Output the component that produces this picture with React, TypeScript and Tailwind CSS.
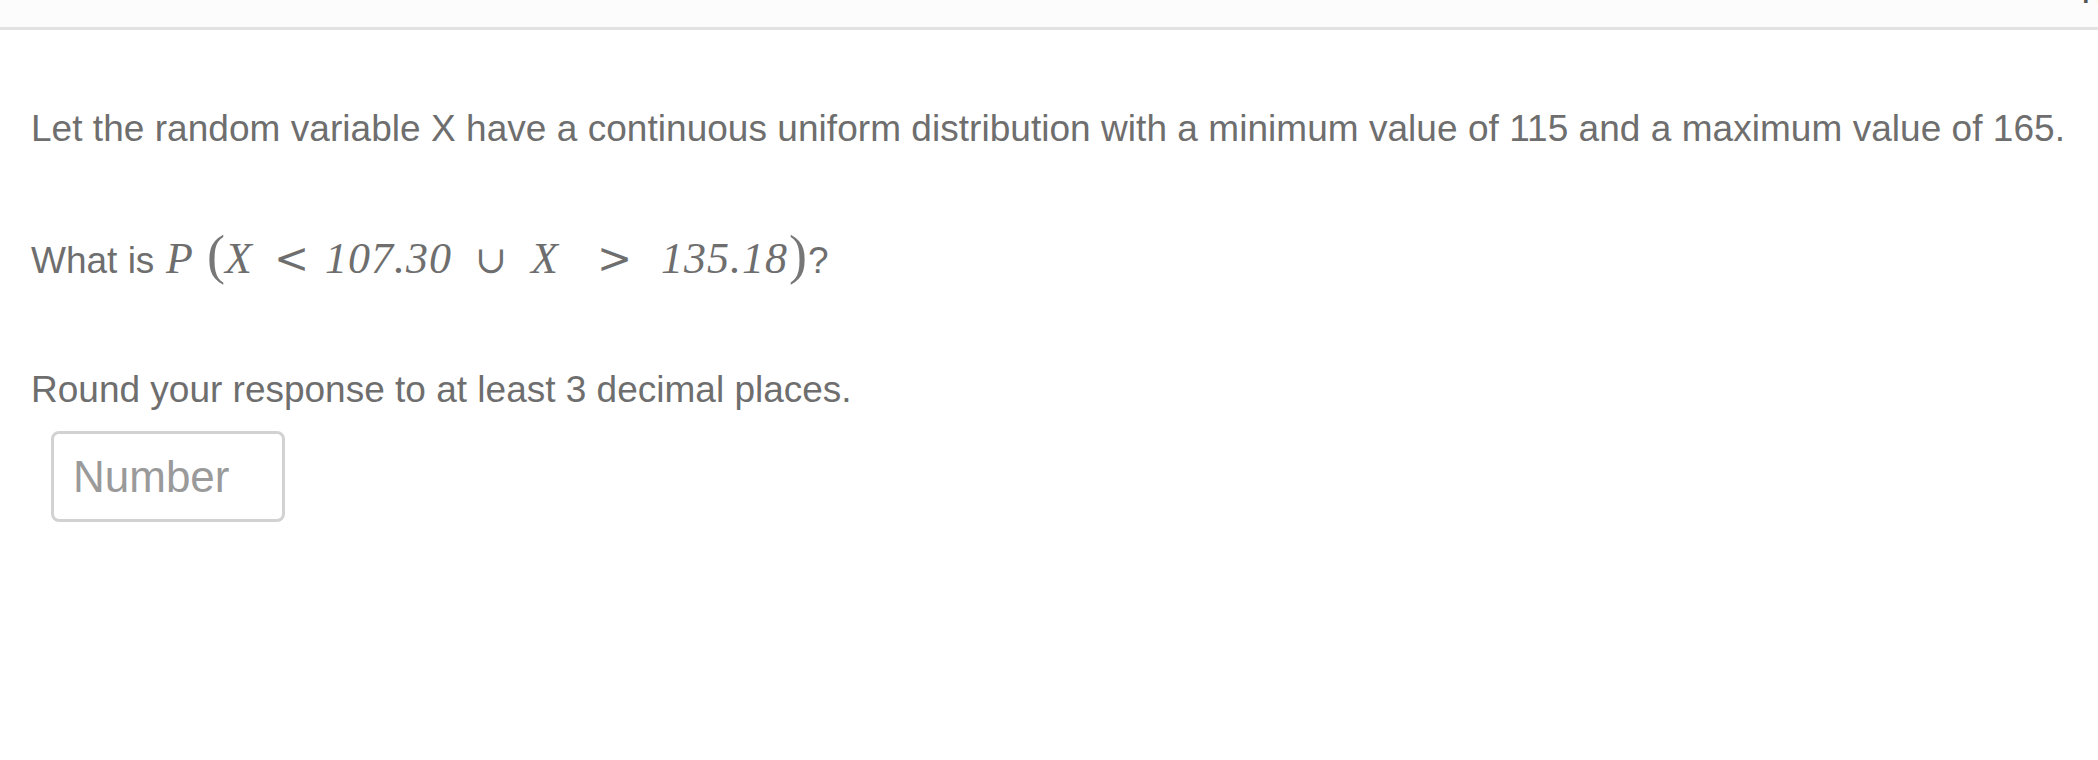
import React from "react";

export default function App() {
  const sans = "font-['Liberation_Sans',Arial,sans-serif]";
  const serif = "font-['Liberation_Serif','Times_New_Roman',serif]";
  const dv = "font-['DejaVu_Serif','Liberation_Serif',serif]";
  return (
    <div className={`min-h-[760px] w-full bg-white text-[#6e6e6e] ${sans}`}>
      <div className="relative h-[30px] overflow-hidden border-b-[3px] border-[#e2e2e2] bg-[#fcfcfc]">
        <span className="absolute right-[-6px] top-[-27px] text-[37px] leading-[36px] text-[#555]">
          Ti
        </span>
      </div>
      <main className="pl-[31px] pt-[73px]">
        <p className="text-[37px] leading-[52px] tracking-[0.04px]">
          Let the random variable X have a continuous uniform distribution with a minimum value of 115 and a maximum value of 165.
        </p>
        <div className="mt-[74px] flex h-[52px] items-baseline text-[37px] leading-[52px]">
          <span className="inline-block w-[135px]">What is</span>
          <span className={`${serif} inline-block w-[41px] text-[44px] italic`}>P</span>
          <span className={`${serif} inline-block w-[18px] text-[54px] leading-[52px] text-[#777]`}>(</span>
          <span className={`${serif} inline-block w-[49px] text-[44px] italic`}>X</span>
          <span className={`${dv} inline-block w-[51px] text-[42px]`}>&lt;</span>
          <span className={`${serif} inline-block w-[150px] text-[44px] italic tracking-[1px]`}>107.30</span>
          <span className={`${dv} inline-block w-[56px] text-[38px]`}>∪</span>
          <span className={`${serif} inline-block w-[66px] text-[44px] italic`}>X</span>
          <span className={`${dv} inline-block w-[64px] text-[42px]`}>&gt;</span>
          <span className={`${serif} inline-block w-[128px] text-[44px] italic tracking-[1px]`}>135.18</span>
          <span className={`${serif} inline-block w-[19px] text-[54px] leading-[52px] text-[#777]`}>)</span>
          <span>?</span>
        </div>
        <p className="mt-[83px] text-[37px] leading-[52px]">
          Round your response to at least 3 decimal places.
        </p>
        <div className="ml-[20px] mt-[15px]">
          <input
            type="text"
            placeholder="Number"
            className={`${sans} h-[91px] w-[234px] rounded-[8px] border-[3px] border-[#d2d2d2] bg-white pl-[19px] text-[44px] text-[#6e6e6e] outline-none placeholder:text-[#9a9a9a]`}
          />
        </div>
      </main>
    </div>
  );
}
